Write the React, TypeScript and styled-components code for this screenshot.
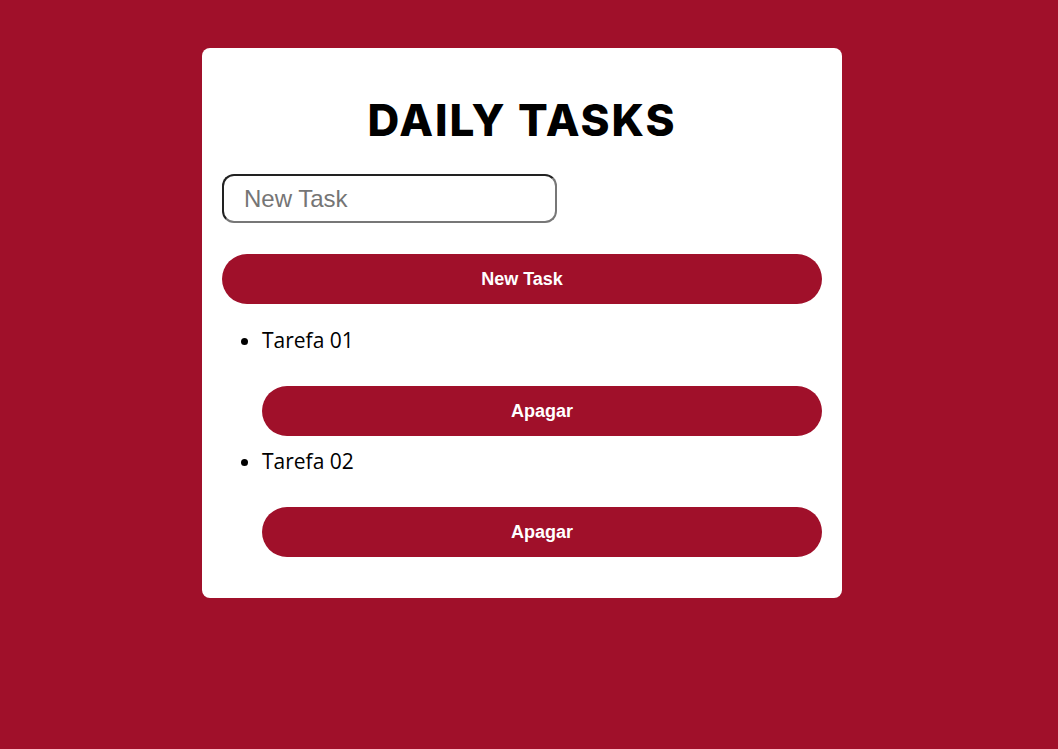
import styled, { createGlobalStyle } from 'styled-components';

const GlobalStyle = createGlobalStyle`
	html, body {
		margin: 0;
		padding: 0;
		background: #a0102a;
		min-height: 100vh;
	}

	body {
		font-family: 'Open Sans', 'Liberation Sans', sans-serif;
	}
`;

const Page = styled.main`
	display: flex;
	justify-content: center;
	align-items: flex-start;
	padding-top: 48px;
	min-height: 100vh;
	box-sizing: border-box;
`;

const Card = styled.section`
	width: 640px;
	box-sizing: border-box;
	background: #ffffff;
	border-radius: 8px;
	padding: 20px 20px 41px;
	margin-left: -14px;
`;

const Title = styled.h1`
	margin: 25px 0 27px;
	text-align: center;
	font-family: Inter, 'Liberation Sans', sans-serif;
	font-weight: 800;
	font-size: 44px;
	line-height: 54px;
	letter-spacing: 1.9px;
	color: #000000;
`;

const TaskInput = styled.input`
	display: block;
	width: 335px;
	height: 49px;
	box-sizing: border-box;
	border: 2px solid #222222;
	border-right-color: #777777;
	border-bottom-color: #777777;
	border-radius: 12px;
	padding: 0 20px;
	font-family: 'Liberation Sans', Arial, sans-serif;
	font-size: 24px;
	color: #222;
	outline: none;

	&::placeholder {
		color: #757575;
	}
`;

const PillButton = styled.button<{ $top?: number; $bottom?: number }>`
	display: block;
	width: 100%;
	height: 50px;
	border: none;
	border-radius: 25px;
	background: #a0102a;
	color: #ffffff;
	font-family: 'Liberation Sans', Arial, sans-serif;
	font-weight: 700;
	font-size: 18px;
	cursor: pointer;
	margin: ${({ $top = 0 }) => $top}px 0 ${({ $bottom = 0 }) => $bottom}px;
`;

const TaskList = styled.ul`
	margin: 22px 0 0;
	padding-left: 40px;
`;

const TaskItem = styled.li`
	font-size: 21px;
	line-height: 28px;
	color: #000000;
	margin-bottom: 11px;

	&:last-child {
		margin-bottom: 0;
	}
`;

const tasks = ['Tarefa 01', 'Tarefa 02'];

const App = () => {
	return (
		<>
			<GlobalStyle />
			<Page>
				<Card>
					<Title>DAILY TASKS</Title>
					<TaskInput placeholder="New Task" />
					<PillButton $top={31}>New Task</PillButton>
					<TaskList>
						{tasks.map((task) => (
							<TaskItem key={task}>
								{task}
								<PillButton $top={32}>Apagar</PillButton>
							</TaskItem>
						))}
					</TaskList>
				</Card>
			</Page>
		</>
	);
};

export default App;
